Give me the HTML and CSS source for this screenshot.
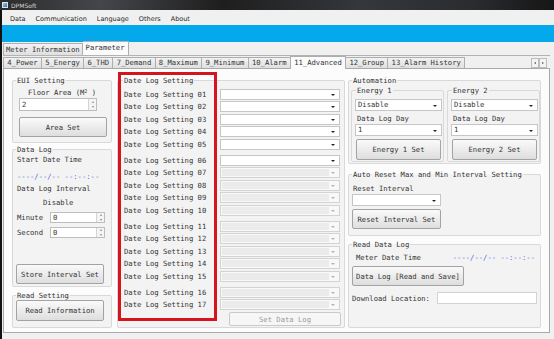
FILE: index.html
```html
<!DOCTYPE html>
<html lang="en">
<head>
    <meta charset="UTF-8">
    <meta name="viewport" content="width=device-width, initial-scale=1.0">
    <title>DPMSoft</title>
    <link rel="stylesheet" href="styles.css">
</head>
<body>
    <div class="titlebar">
        <span class="app-icon"></span>
        <span class="app-title">DPMSoft</span>
    </div>
    <div class="app">
        <nav class="menubar">
            <span>Data</span>
            <span>Communication</span>
            <span>Language</span>
            <span>Others</span>
            <span>About</span>
        </nav>
        <div class="ribbon"></div>

        <div class="main-tabs">
            <span class="tab">Meter Information</span>
            <span class="tab active">Parameter</span>
        </div>

        <div class="main-pane">
            <div class="sub-tabs">
                <span class="tab">4_Power</span>
                <span class="tab">5_Energy</span>
                <span class="tab">6_THD</span>
                <span class="tab">7_Demand</span>
                <span class="tab">8_Maximum</span>
                <span class="tab">9_Minimum</span>
                <span class="tab">10_Alarm</span>
                <span class="tab active">11_Advanced</span>
                <span class="tab">12_Group</span>
                <span class="tab">13_Alarm History</span>
                <div class="tab-scroll">
                    <span class="scroll-btn left"></span>
                    <span class="scroll-btn right"></span>
                </div>
            </div>

            <div class="page">
                <!-- left column -->
                <div class="col col-left">
                    <fieldset class="group eui">
                        <legend>EUI Setting</legend>
                        <div class="floor-label">Floor Area (M<sup>2</sup> )</div>
                        <div class="spin floor-spin">
                            <span class="spin-val">2</span>
                            <span class="spin-arrows"><i class="up"></i><i class="down"></i></span>
                        </div>
                        <button class="btn area-btn">Area Set</button>
                    </fieldset>

                    <fieldset class="group datalog">
                        <legend>Data Log</legend>
                        <div class="line start-label">Start Date Time</div>
                        <div class="line dash start-dash">----/--/-- --:--:--</div>
                        <div class="line interval-label">Data Log Interval</div>
                        <div class="line disable-label">Disable</div>
                        <div class="spin-row minute-row">
                            <span class="spin-label">Minute</span>
                            <div class="spin small-spin">
                                <span class="spin-val">0</span>
                                <span class="spin-arrows"><i class="up"></i><i class="down"></i></span>
                            </div>
                        </div>
                        <div class="spin-row second-row">
                            <span class="spin-label">Second</span>
                            <div class="spin small-spin">
                                <span class="spin-val">0</span>
                                <span class="spin-arrows"><i class="up"></i><i class="down"></i></span>
                            </div>
                        </div>
                        <button class="btn store-btn">Store Interval Set</button>
                    </fieldset>

                    <fieldset class="group readset">
                        <legend>Read Setting</legend>
                        <button class="btn read-btn">Read Information</button>
                    </fieldset>
                </div>

                <!-- middle column -->
                <div class="col col-mid">
                    <fieldset class="group logset">
                        <legend>Date Log Setting</legend>
                        <div class="log-block">
                            <div class="log-row"><span class="log-label">Date Log Setting 01</span><span class="select"></span></div>
                            <div class="log-row"><span class="log-label">Date Log Setting 02</span><span class="select"></span></div>
                            <div class="log-row"><span class="log-label">Date Log Setting 03</span><span class="select"></span></div>
                            <div class="log-row"><span class="log-label">Date Log Setting 04</span><span class="select"></span></div>
                            <div class="log-row"><span class="log-label">Date Log Setting 05</span><span class="select"></span></div>
                        </div>
                        <div class="log-block">
                            <div class="log-row"><span class="log-label">Date Log Setting 06</span><span class="select"></span></div>
                            <div class="log-row"><span class="log-label">Date Log Setting 07</span><span class="select disabled"></span></div>
                            <div class="log-row"><span class="log-label">Date Log Setting 08</span><span class="select disabled"></span></div>
                            <div class="log-row"><span class="log-label">Date Log Setting 09</span><span class="select disabled"></span></div>
                            <div class="log-row"><span class="log-label">Date Log Setting 10</span><span class="select disabled"></span></div>
                        </div>
                        <div class="log-block">
                            <div class="log-row"><span class="log-label">Date Log Setting 11</span><span class="select disabled"></span></div>
                            <div class="log-row"><span class="log-label">Date Log Setting 12</span><span class="select disabled"></span></div>
                            <div class="log-row"><span class="log-label">Date Log Setting 13</span><span class="select disabled"></span></div>
                            <div class="log-row"><span class="log-label">Date Log Setting 14</span><span class="select disabled"></span></div>
                            <div class="log-row"><span class="log-label">Date Log Setting 15</span><span class="select disabled"></span></div>
                        </div>
                        <div class="log-block">
                            <div class="log-row"><span class="log-label">Date Log Setting 16</span><span class="select disabled"></span></div>
                            <div class="log-row"><span class="log-label">Date Log Setting 17</span><span class="select disabled"></span></div>
                        </div>
                        <button class="btn setlog-btn" disabled>Set Data Log</button>
                    </fieldset>
                    <div class="highlight"></div>
                </div>

                <!-- right column -->
                <div class="col col-right">
                    <fieldset class="group automation">
                        <legend>Automation</legend>
                        <div class="energy-row">
                            <fieldset class="group energy">
                                <legend>Energy 1</legend>
                                <span class="select energy-select">Disable</span>
                                <div class="line day-label">Data Log Day</div>
                                <span class="select energy-select day-select">1</span>
                                <button class="btn energy-btn">Energy 1 Set</button>
                            </fieldset>
                            <fieldset class="group energy">
                                <legend>Energy 2</legend>
                                <span class="select energy-select">Disable</span>
                                <div class="line day-label">Data Log Day</div>
                                <span class="select energy-select day-select">1</span>
                                <button class="btn energy-btn">Energy 2 Set</button>
                            </fieldset>
                        </div>
                    </fieldset>

                    <fieldset class="group reset">
                        <legend>Auto Reset Max and Min Interval Setting</legend>
                        <div class="line reset-label">Reset Interval</div>
                        <span class="select reset-select"></span>
                        <button class="btn reset-btn">Reset Interval Set</button>
                    </fieldset>

                    <fieldset class="group readlog">
                        <legend>Read Data Log</legend>
                        <div class="meter-row">
                            <span class="meter-label">Meter Date Time</span>
                            <span class="dash">----/--/-- --:--:--</span>
                        </div>
                        <button class="btn readlog-btn">Data Log [Read and Save]</button>
                        <div class="download-row">
                            <span>Download Location:</span>
                            <span class="text-input"></span>
                        </div>
                    </fieldset>
                </div>
            </div>
        </div>
    </div>
</body>
</html>
```

FILE: styles.css
```css
* {
    box-sizing: border-box;
}
body {
    margin: 0;
    width: 554px;
    height: 339px;
    overflow: hidden;
    background-color: #f0f0f0;
    color: #333;
    font-family: "DejaVu Sans Mono", monospace;
    font-size: 7.2px;
    line-height: 9px;
}

/* window chrome */
.titlebar {
    height: 10px;
    display: flex;
    align-items: center;
    gap: 3px;
    padding-left: 2px;
    background: linear-gradient(90deg, #2c2c2c, #44464b 18%, #1e1e1e 40%, #34373c 65%, #2a2c30 85%, #161616);
    color: #d6d6d6;
    font-family: "DejaVu Sans", sans-serif;
    font-size: 6px;
}
.app-icon {
    width: 6px;
    height: 6px;
    border: 1px solid #d7e4ef;
    background: linear-gradient(135deg, #a8cdea, #2f6fae);
}
.app {
    height: 329px;
    border-left: 2px solid #121212;
}
.menubar {
    height: 15px;
    display: flex;
    align-items: center;
    padding: 3px 0 0 3px;
    font-family: "DejaVu Sans", sans-serif;
    font-size: 6.5px;
    color: #2a2a2a;
}
.menubar span {
    padding: 0 5px;
}
.ribbon {
    height: 17px;
    background-color: #03a9ea;
}

/* tabs */
.tab {
    display: block;
    border: 1px solid #aeaeae;
    border-bottom: none;
    background: linear-gradient(#f2f2f2, #e0e0e0);
    white-space: nowrap;
    text-align: center;
}
.tab.active {
    background: #fbfbfb;
}
.main-tabs {
    height: 13px;
    display: flex;
    align-items: flex-end;
    padding-left: 1px;
}
.main-tabs .tab {
    height: 12px;
    padding: 0 2px;
    line-height: 11px;
}
.main-tabs .tab.active {
    height: 14px;
    padding: 0 3px;
    border-left: none;
}
.main-pane {
    height: 278px;
    margin: 0 4px 0 1px;
    border-top: 1px solid #b3b3b3;
}
.sub-tabs {
    height: 12px;
    display: flex;
    align-items: flex-end;
}
.sub-tabs .tab {
    height: 11px;
    padding: 0 3.3px;
    margin-left: -1px;
    line-height: 10px;
}
.sub-tabs .tab:first-child {
    margin-left: 0;
}
.sub-tabs .tab.active {
    height: 13px;
    margin-bottom: -1px;
    line-height: 11px;
    position: relative;
}
.tab-scroll {
    display: flex;
    margin: 0 3px 0 auto;
    align-self: flex-end;
}
.scroll-btn {
    width: 8px;
    height: 10px;
    border: 1px solid #bdbdbd;
    background: #f3f3f3;
    display: flex;
    align-items: center;
    justify-content: center;
}
.scroll-btn::after {
    content: "";
    border-top: 1.5px solid transparent;
    border-bottom: 1.5px solid transparent;
}
.scroll-btn.left::after {
    border-right: 2px solid #555;
}
.scroll-btn.right::after {
    border-left: 2px solid #555;
}

/* page */
.page {
    height: 265px;
    display: flex;
    padding: 7px 8px 0 8px;
    border: 1px solid #a9a9a9;
    background-color: #fcfcfc;
}
.col {
    display: flex;
    flex-direction: column;
    flex-shrink: 0;
}
.col-left {
    width: 100px;
}
.col-mid {
    width: 228px;
    margin-left: 5px;
    position: relative;
}
.col-right {
    width: 193px;
    margin-left: 3px;
}

.group {
    margin: 0;
    padding: 0 4px;
    min-width: 0;
    border: 1px solid #d9d9d9;
    border-radius: 2px;
    background-color: #f3f3f3;
    flex-shrink: 0;
}
.group legend {
    padding: 0 1px;
    margin-left: -1px;
    line-height: 9px;
    height: 9px;
}
.line {
    height: 9px;
    white-space: nowrap;
}
.dash {
    color: #4f63cf;
    white-space: nowrap;
}

/* controls */
.btn {
    display: block;
    margin: 0;
    padding: 0;
    border: 1px solid #a3a3a3;
    border-radius: 2px;
    background: linear-gradient(#fafafa, #dedede);
    color: #333;
    font-family: inherit;
    font-size: 7.2px;
    line-height: 9px;
}
.btn:disabled {
    background: #f6f6f6;
    border-color: #cacaca;
    color: #9a9a9a;
}
.select {
    display: block;
    position: relative;
    height: 11px;
    padding-left: 2px;
    border: 1px solid #c6c6c6;
    background: #fff;
    line-height: 9px;
    white-space: nowrap;
}
.select::after {
    content: "";
    position: absolute;
    right: 4px;
    top: 4px;
    border-left: 2px solid transparent;
    border-right: 2px solid transparent;
    border-top: 2.5px solid #222;
}
.select.disabled {
    background: #f8f8f8;
    border-color: #d3d3d3;
}
.select.disabled::before {
    content: "";
    position: absolute;
    left: 1px;
    top: 1px;
    bottom: 1px;
    right: 10px;
    background: #ebebeb;
}
.select.disabled::after {
    border-top-color: #b4b4b4;
}
.spin {
    display: flex;
    height: 13px;
    border: 1px solid #bdbdbd;
    background: #fff;
}
.spin-val {
    flex: 1;
    padding-left: 2px;
    line-height: 11px;
}
.spin-arrows {
    width: 8px;
    display: flex;
    flex-direction: column;
    border-left: 1px solid #d4d4d4;
    background: #f4f4f4;
}
.spin-arrows i {
    flex: 1;
    display: flex;
    align-items: center;
    justify-content: center;
}
.spin-arrows i::after {
    content: "";
    border-left: 1.5px solid transparent;
    border-right: 1.5px solid transparent;
}
.spin-arrows .up::after {
    border-bottom: 2px solid #8a8a8a;
}
.spin-arrows .down::after {
    border-top: 2px solid #8a8a8a;
}
.text-input {
    display: block;
    width: 100px;
    height: 12px;
    border: 1px solid #d3d3d3;
    background: #fff;
}

/* left column */
.eui {
    height: 67px;
}
.floor-label {
    margin-top: 3px;
    height: 9px;
    text-align: center;
}
.floor-label sup {
    font-size: 5px;
    vertical-align: 2px;
    line-height: 0;
}
.floor-spin {
    width: 78px;
    margin: 1px 0 0 2px;
}
.area-btn {
    width: 88px;
    height: 20px;
    margin: 6px 0 0 2px;
}
.datalog {
    height: 142px;
    margin-top: 2px;
}
.start-label {
    margin-top: 1px;
}
.start-dash {
    margin-top: 8px;
}
.interval-label {
    margin-top: 3px;
}
.disable-label {
    margin-top: 5px;
    padding-left: 26px;
}
.spin-row {
    display: flex;
    align-items: center;
}
.minute-row {
    margin-top: 5px;
}
.second-row {
    margin-top: 4px;
}
.spin-label {
    width: 33px;
}
.small-spin {
    width: 55px;
    height: 11px;
}
.small-spin .spin-val {
    line-height: 9px;
}
.store-btn {
    width: 88px;
    height: 20px;
    margin: 26px 0 0 -1px;
}
.readset {
    height: 37px;
    margin-top: 4px;
}
.read-btn {
    width: 88px;
    height: 21px;
    margin-left: -1px;
}

/* middle column */
.logset {
    height: 252px;
    padding-left: 6px;
}
.log-block {
    margin-top: 3.5px;
}
.log-block:first-of-type {
    margin-top: 2.75px;
}
.log-row {
    height: 12.5px;
    display: flex;
    align-items: center;
}
.log-label {
    width: 97px;
    white-space: nowrap;
}
.log-row .select {
    width: 121px;
}
.setlog-btn {
    width: 112px;
    height: 14px;
    margin: 1.25px 0 0 105px;
}
.highlight {
    position: absolute;
    left: 1px;
    top: -4px;
    width: 99px;
    height: 249px;
    border: 3px solid #d5141e;
}

/* right column */
.automation {
    height: 88px;
    padding: 0 0 0 4px;
}
.energy-row {
    display: flex;
    gap: 3px;
    margin: 1px 0 0 -2px;
}
.energy {
    width: 93px;
    height: 76px;
    padding: 0 3px;
}
.energy legend {
    margin-left: 1px;
}
.energy-select {
    width: 87px;
    height: 12px;
    margin-top: 4px;
}
.energy-select::after {
    top: 4.5px;
}
.day-label {
    margin-top: 2.5px;
    padding-left: 2px;
}
.day-select {
    margin-top: 1.5px;
}
.energy-btn {
    width: 85px;
    height: 21px;
    margin: 3px 0 0 1px;
}
.reset {
    height: 66.5px;
    margin-top: 5.5px;
    padding: 0 3px;
}
.reset legend,
.readlog legend {
    margin-left: 0;
}
.reset-label {
    margin-top: 5px;
    padding-left: 1px;
}
.reset-select {
    width: 89px;
    height: 12px;
    margin-top: 1.5px;
}
.reset-select::after {
    top: 4.5px;
}
.reset-btn {
    width: 89px;
    height: 20px;
    margin-top: 3px;
}
.readlog {
    height: 88.5px;
    margin-top: 3.5px;
    padding: 0 3px;
}
.meter-row {
    display: flex;
    height: 9px;
    margin-top: 4px;
}
.meter-label {
    padding-left: 4px;
}
.meter-row .dash {
    margin: 0 2px 0 auto;
}
.readlog-btn {
    width: 112px;
    height: 20px;
    margin-top: 4.5px;
}
.download-row {
    display: flex;
    align-items: center;
    margin-top: 6px;
}
.download-row .text-input {
    margin-left: auto;
}
```
